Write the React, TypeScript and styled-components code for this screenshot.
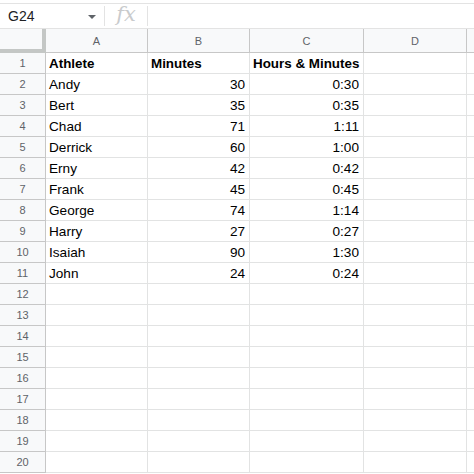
import { createGlobalStyle, styled } from "styled-components";

const GlobalStyle = createGlobalStyle`
  html, body {
    margin: 0;
    padding: 0;
    background: #ffffff;
    overflow: hidden;
  }
  body {
    font-family: "Liberation Sans", Arial, sans-serif;
  }
`;

const Page = styled.div`
  width: 474px;
  height: 474px;
  padding-top: 3px;
  box-sizing: border-box;
  overflow: hidden;
  background: #ffffff;
`;

const FormulaBar = styled.div`
  display: flex;
  align-items: center;
  height: 26px;
  box-sizing: border-box;
  border-top: 1px solid #e3e3e3;
  border-bottom: 1px solid #e3e3e3;
`;

const NameBox = styled.div`
  display: flex;
  align-items: center;
  justify-content: space-between;
  width: 104px;
  padding: 0 8px 0 8px;
  box-sizing: border-box;
  font-size: 14px;
  color: #202124;
`;

const Caret = styled.span`
  width: 0;
  height: 0;
  border-left: 4px solid transparent;
  border-right: 4px solid transparent;
  border-top: 4px solid #5f6368;
  margin-top: 2px;
`;

const Divider = styled.div`
  width: 1px;
  height: 20px;
  background: #e3e3e3;
`;

const FxLabel = styled.div`
  width: 42px;
  text-align: center;
  font-family: "DejaVu Serif", "Liberation Serif", serif;
  font-style: italic;
  font-size: 21px;
  color: #c9cbcd;
  line-height: 1;
  margin-top: -3px;
`;

const Sheet = styled.div`
  display: grid;
  grid-template-columns: 46px 102px 102px 114px 103px 1fr;
  grid-auto-rows: 21px;
  grid-template-rows: 24px;
`;

const Corner = styled.div`
  background: #f8f9fa;
  border-right: 4px solid #c4c7c5;
  border-bottom: 4px solid #c4c7c5;
  box-sizing: border-box;
`;

const HeadCell = styled.div`
  display: flex;
  align-items: center;
  justify-content: center;
  background: #f8f9fa;
  border-right: 1px solid #c7c7c7;
  border-bottom: 1px solid #c7c7c7;
  box-sizing: border-box;
  font-size: 11px;
  color: #5f6368;
`;

const Cell = styled.div<{ $align?: "left" | "right"; $bold?: boolean }>`
  display: flex;
  align-items: center;
  justify-content: ${(p) => (p.$align === "right" ? "flex-end" : "flex-start")};
  padding: 0 4px 0 3px;
  border-right: 1px solid #e2e3e3;
  border-bottom: 1px solid #e2e3e3;
  box-sizing: border-box;
  font-size: ${(p) => (p.$bold ? "13.4px" : "13.6px")};
  font-weight: ${(p) => (p.$bold ? 700 : 400)};
  color: #000000;
  white-space: nowrap;
  overflow: hidden;
`;

const data: [string, string, string][] = [
  ["Athlete", "Minutes", "Hours & Minutes"],
  ["Andy", "30", "0:30"],
  ["Bert", "35", "0:35"],
  ["Chad", "71", "1:11"],
  ["Derrick", "60", "1:00"],
  ["Erny", "42", "0:42"],
  ["Frank", "45", "0:45"],
  ["George", "74", "1:14"],
  ["Harry", "27", "0:27"],
  ["Isaiah", "90", "1:30"],
  ["John", "24", "0:24"],
];

const columns = ["A", "B", "C", "D", ""];

function App() {
  const rows = Array.from({ length: 20 }, (_, i) => data[i] ?? ["", "", ""]);
  return (
    <>
      <GlobalStyle />
      <Page>
        <FormulaBar>
          <NameBox>
            G24
            <Caret />
          </NameBox>
          <Divider />
          <FxLabel>fx</FxLabel>
          <Divider />
        </FormulaBar>
        <Sheet>
          <Corner />
          {columns.map((c, i) => (
            <HeadCell key={i}>{c}</HeadCell>
          ))}
          {rows.map((r, i) => {
            const head = i === 0;
            return [
              <HeadCell key={`h${i}`}>{i + 1}</HeadCell>,
              <Cell key={`a${i}`} $bold={head}>
                {r[0]}
              </Cell>,
              <Cell key={`b${i}`} $bold={head} $align={head ? "left" : "right"}>
                {r[1]}
              </Cell>,
              <Cell key={`c${i}`} $bold={head} $align={head ? "left" : "right"}>
                {r[2]}
              </Cell>,
              <Cell key={`d${i}`} />,
              <Cell key={`e${i}`} />,
            ];
          })}
        </Sheet>
      </Page>
    </>
  );
}

export default App;
